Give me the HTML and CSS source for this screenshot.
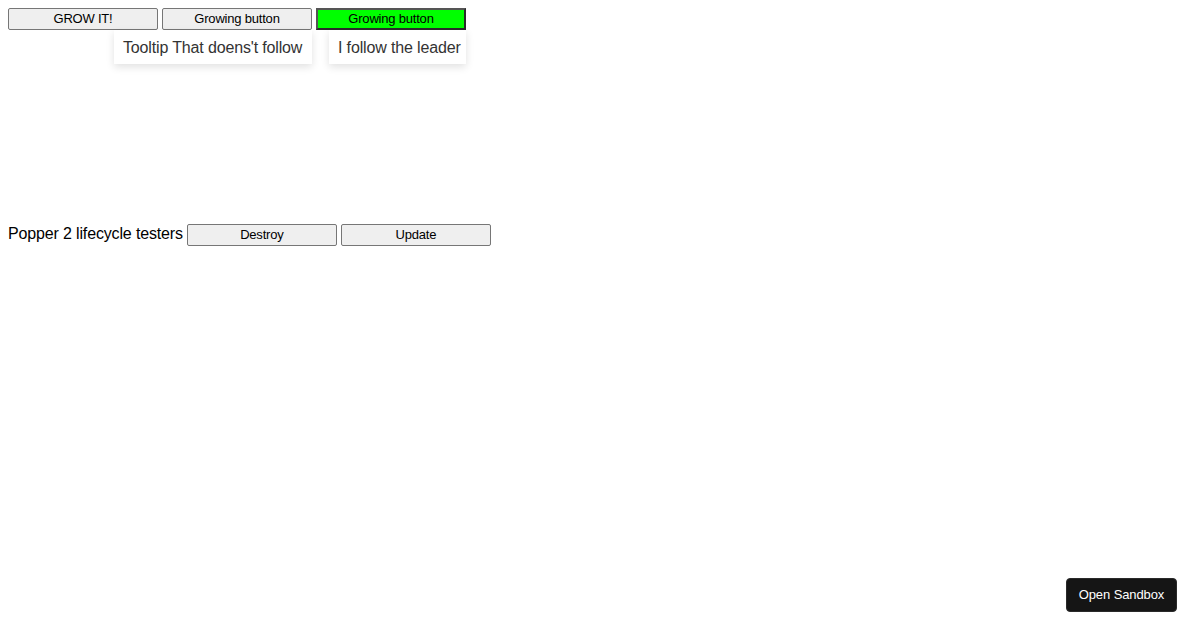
FILE: index.html
```html
<!DOCTYPE html>
<html>
<head>
<meta charset="utf-8">
<link rel="stylesheet" href="styles.css">
</head>
<body>
<div class="top">
  <div class="row">
    <button class="btn">GROW IT!</button>
    <button class="btn">Growing button</button>
    <button class="btn green">Growing button</button>
  </div>
  <div class="tip tip1">Tooltip That doens't follow</div>
  <div class="tip tip2">I follow the leader</div>
</div>
<div class="life">
  <span class="label">Popper 2 lifecycle testers</span>
  <button class="btn">Destroy</button>
  <button class="btn">Update</button>
</div>
<button class="sandbox">Open Sandbox</button>
</body>
</html>
```
FILE: styles.css
```css
html, body {
  margin: 0;
  padding: 0;
  background: #fff;
}
body {
  padding: 8px;
  font-family: "Liberation Sans", Arial, sans-serif;
  font-size: 16px;
  color: #000;
  position: relative;
  height: 614px;
  box-sizing: border-box;
}
.top {
  height: 216px;
  position: relative;
}
.row {
  display: flex;
  gap: 4px;
}
.btn {
  width: 150px;
  height: 22px;
  box-sizing: border-box;
  padding: 0 0 2px;
  font-family: "Liberation Sans", Arial, sans-serif;
  font-size: 13px;
  letter-spacing: -0.2px;
  color: #000;
  background: #efefef;
  border: 1px solid #767676;
  border-radius: 2px;
}
.green {
  background: #00ff00;
  border: 2px solid #2a2a2a;
  border-top-color: #555;
  border-left-color: #555;
  border-radius: 0;
}
.tip {
  position: absolute;
  top: 22px;
  height: 34px;
  box-sizing: border-box;
  padding: 9px 9px 7px;
  line-height: 18px;
  letter-spacing: -0.15px;
  color: #333;
  background: #fff;
  box-shadow: 0 3px 8px rgba(0, 0, 0, 0.12);
  white-space: nowrap;
}
.tip1 {
  left: 106px;
  width: 198px;
}
.tip2 {
  left: 321px;
  width: 137px;
}
.life {
  display: flex;
  align-items: center;
  gap: 4px;
  height: 22px;
}
.label {
  line-height: 18px;
  margin-top: -3px;
  letter-spacing: -0.15px;
}
.sandbox {
  position: absolute;
  right: 23px;
  bottom: 2px;
  width: 111px;
  height: 34px;
  background: #151515;
  color: #fff;
  border: 1px solid #2a2a2a;
  border-radius: 4px;
  font-family: "Liberation Sans", Arial, sans-serif;
  font-size: 13px;
  letter-spacing: -0.1px;
  padding: 0 0 2px;
}
```
